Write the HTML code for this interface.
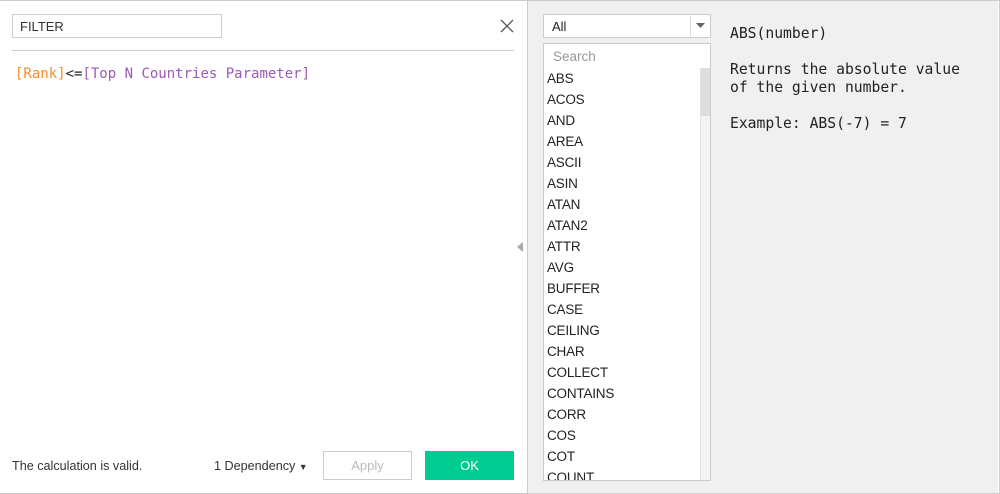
<!DOCTYPE html>
<html><head><style>
*{margin:0;padding:0;box-sizing:border-box}
body{width:1000px;height:494px;overflow:hidden;background:#fff;font-family:"Liberation Sans",sans-serif;position:relative}
.abs{position:absolute}
.mono{font-family:"DejaVu Sans Mono","Liberation Mono",monospace}
.item{position:absolute;left:3px;font-size:13.5px;color:#222;letter-spacing:-0.2px}
</style></head><body>
<div class="abs" style="left:0;top:0;width:1000px;height:494px;border:1px solid #ccc;border-left:none"></div>
<div class="abs" style="left:12px;top:14px;width:210px;height:24px;border:1px solid #ccc;font-size:13px;color:#333;padding:4px 7px">FILTER</div>
<svg class="abs" style="left:500px;top:19px" width="14" height="14"><path d="M1 1L13 13M13 1L1 13" stroke="#555" stroke-width="1.3"/></svg>
<div class="abs" style="left:12px;top:50px;width:502px;height:1px;background:#ccc"></div>
<div class="abs mono" style="left:15px;top:66px;font-size:14px;color:#9b59b6;white-space:pre"><span style="color:#f28e2b">[Rank]</span><span style="color:#222">&lt;=</span>[Top N Countries Parameter]</div>
<div class="abs" style="left:12px;top:458px;font-size:13px;color:#333;transform:scaleX(0.97);transform-origin:left">The calculation is valid.</div>
<div class="abs" style="left:214px;top:458px;font-size:13px;color:#333;transform:scaleX(0.97);transform-origin:left">1 Dependency <span style="font-size:9px">▼</span></div>
<div class="abs" style="left:323px;top:451px;width:89px;height:29px;border:1px solid #ccc;font-size:13px;color:#bbb;text-align:center;line-height:27px">Apply</div>
<div class="abs" style="left:425px;top:451px;width:89px;height:29px;background:#00cc92;font-size:13px;color:#fff;text-align:center;line-height:29px">OK</div>
<div class="abs" style="left:527px;top:1px;width:1px;height:492px;background:#ccc"></div>
<svg class="abs" style="left:516px;top:242px" width="8" height="10"><path d="M7 0L1 5L7 10Z" fill="#aaa"/></svg>
<div class="abs" style="left:528px;top:1px;width:470px;height:492px;background:#f0f0f0"></div>
<div class="abs" style="left:543px;top:14px;width:168px;height:24px;background:#fff;border:1px solid #ccc;font-size:13px;color:#222;padding:4px 8px">All</div>
<div class="abs" style="left:690px;top:15px;width:1px;height:22px;background:#ddd"></div>
<svg class="abs" style="left:696px;top:23px" width="10" height="6"><path d="M0 0H9L4.5 5Z" fill="#666"/></svg>
<div class="abs" style="left:543px;top:43px;width:168px;height:26px;background:#fff;border:1px solid #ccc;font-size:13.5px;color:#999;padding:5px 9px">Search</div>
<div class="abs" style="left:543px;top:68px;width:168px;height:413px;background:#fff;border:1px solid #ccc;border-top:none;overflow:hidden">
<div class="abs" style="left:156px;top:0;width:11px;height:413px;background:#f3f3f3;border-left:1px solid #e4e4e4"></div>
<div class="abs" style="left:157px;top:0;width:10px;height:48px;background:#ddd"></div>
<div class="item" style="top:3px">ABS</div><div class="item" style="top:24px">ACOS</div><div class="item" style="top:45px">AND</div><div class="item" style="top:66px">AREA</div><div class="item" style="top:87px">ASCII</div><div class="item" style="top:108px">ASIN</div><div class="item" style="top:129px">ATAN</div><div class="item" style="top:150px">ATAN2</div><div class="item" style="top:171px">ATTR</div><div class="item" style="top:192px">AVG</div><div class="item" style="top:213px">BUFFER</div><div class="item" style="top:234px">CASE</div><div class="item" style="top:255px">CEILING</div><div class="item" style="top:276px">CHAR</div><div class="item" style="top:297px">COLLECT</div><div class="item" style="top:318px">CONTAINS</div><div class="item" style="top:339px">CORR</div><div class="item" style="top:360px">COS</div><div class="item" style="top:381px">COT</div><div class="item" style="top:402px">COUNT</div>
</div>
<div class="abs mono" style="left:730px;top:25px;font-size:14.7px;color:#222;line-height:18px;white-space:pre">ABS(number)

Returns the absolute value
of the given number.

Example: ABS(-7) = 7</div>
</body></html>
